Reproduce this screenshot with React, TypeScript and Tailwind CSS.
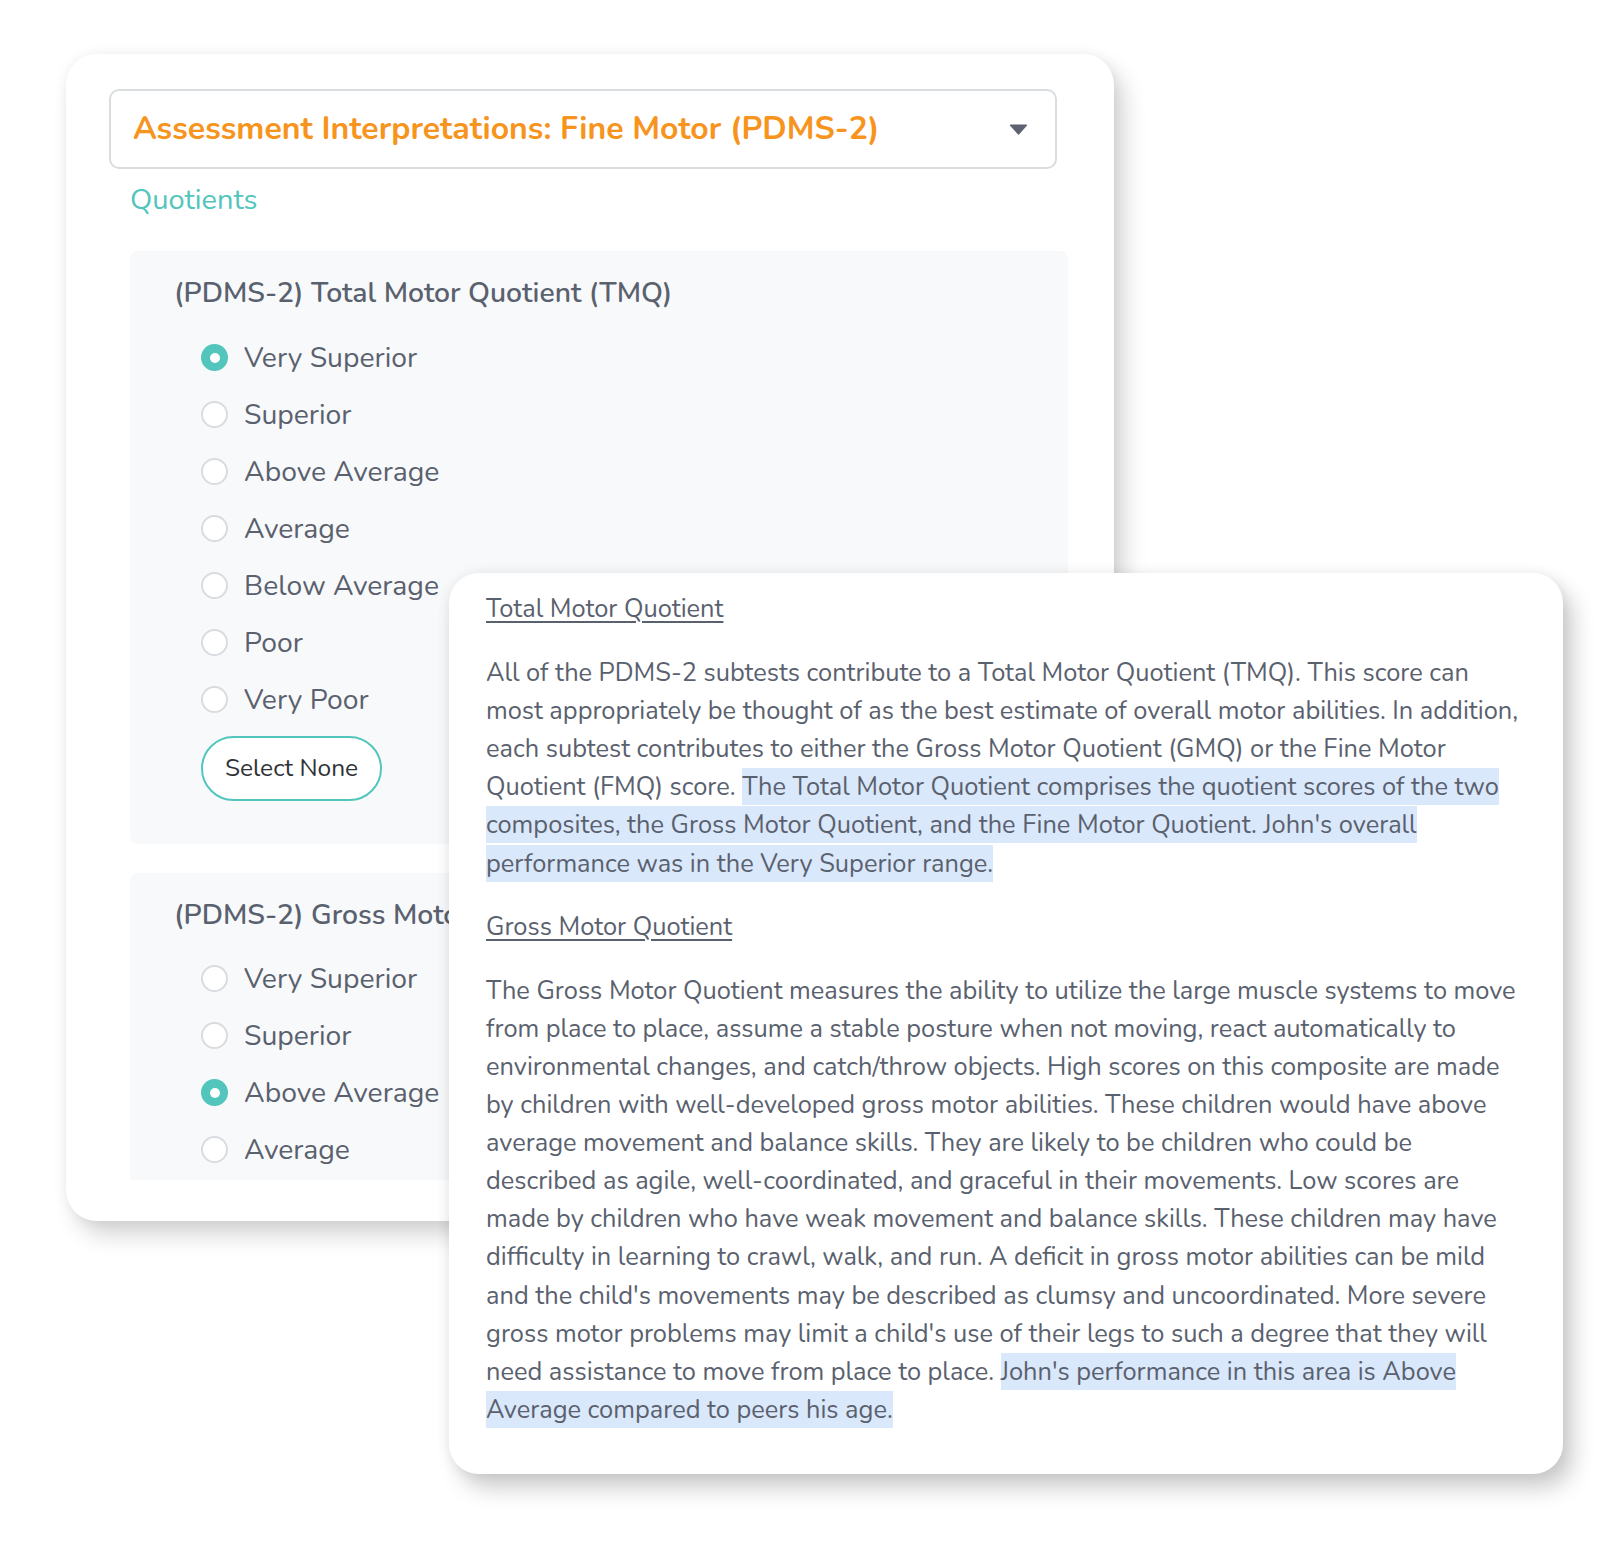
import React from "react";

const FONT = { fontFamily: "Nunito, Lato, 'Noto Sans', sans-serif" };

function Radio({ label, checked }: { label: string; checked?: boolean }) {
  return (
    <div className="flex items-center h-[57px]">
      {checked ? (
        <div className="w-[27px] h-[27px] rounded-full bg-[#52c5bd] flex items-center justify-center">
          <div className="w-[10px] h-[10px] rounded-full bg-white" />
        </div>
      ) : (
        <div className="w-[27px] h-[27px] rounded-full bg-white border-2 border-[#d9dcdf]" />
      )}
      <span className="ml-[16px] text-[28.3px] text-[#5a616e] leading-[38px]">{label}</span>
    </div>
  );
}

function HL({ children }: { children: React.ReactNode }) {
  return <span className="bg-[#dae8fb] py-[1px]">{children}</span>;
}

function Lines({ lines }: { lines: React.ReactNode[] }) {
  return (
    <div>
      {lines.map((l, i) => (
        <div key={i} className="whitespace-nowrap">
          {l}
        </div>
      ))}
    </div>
  );
}

export default function App() {
  return (
    <div className="relative w-[1600px] h-[1545px] bg-white overflow-hidden" style={FONT}>
      {/* Card 1 */}
      <div className="absolute left-[66px] top-[54px] w-[1048px] h-[1167px] bg-white rounded-[31px] shadow-[10px_14px_22px_rgba(0,0,0,0.17),0_0_14px_rgba(0,0,0,0.06)] pt-[35px] pb-[41px] flex flex-col">
        <div className="ml-[43px] w-[948px] h-[80px] shrink-0 border-2 border-[#dadddf] rounded-[10px] flex items-center justify-between pl-[22px] pr-[27px]">
          <span className="text-[32px] font-bold text-[#f7941d] leading-[42px]">
            Assessment Interpretations: Fine Motor (PDMS-2)
          </span>
          <svg width="19" height="11" viewBox="0 0 19 11">
            <path d="M1 1.5 Q0.3 0.5 1.6 0.5 H17.4 Q18.7 0.5 18 1.5 L10.5 10 Q9.5 11 8.5 10 Z" fill="#5e6371" />
          </svg>
        </div>
        <div className="flex-1 overflow-hidden pl-[64px]">
          <div className="mt-[12px] text-[29px] leading-[38px] text-[#52c5bd]">Quotients</div>
          <div className="mt-[32px] w-[938px] bg-[#f8f9fb] rounded-[8px] pt-[23px] pb-[43px]">
            <div className="pl-[44px] text-[28.3px] font-semibold leading-[38px] text-[#5a616e]">
              (PDMS-2) Total Motor Quotient (TMQ)
            </div>
            <div className="pl-[71px] mt-[17px]">
              <Radio label="Very Superior" checked />
              <Radio label="Superior" />
              <Radio label="Above Average" />
              <Radio label="Average" />
              <Radio label="Below Average" />
              <Radio label="Poor" />
              <Radio label="Very Poor" />
              <button className="mt-[8px] w-[181px] h-[65px] rounded-full border-2 border-[#52c5bd] bg-white text-[24.5px] text-[#2f3338]">
                Select None
              </button>
            </div>
          </div>
          <div className="mt-[29px] w-[938px] bg-[#f8f9fb] rounded-[8px] pt-[23px] pb-[42px]">
            <div className="pl-[44px] text-[28.3px] font-semibold leading-[38px] text-[#5a616e]">
              (PDMS-2) Gross Motor Quotient (GMQ)
            </div>
            <div className="pl-[71px] mt-[16px]">
              <Radio label="Very Superior" />
              <Radio label="Superior" />
              <Radio label="Above Average" checked />
              <Radio label="Average" />
            </div>
          </div>
        </div>
      </div>

      {/* Card 2 */}
      <div className="absolute left-[449px] top-[573px] w-[1114px] h-[901px] bg-white rounded-[30px] shadow-[10px_14px_22px_rgba(0,0,0,0.2),0_0_14px_rgba(0,0,0,0.07)] pl-[37px] pt-[17px] text-[25.4px] leading-[38.1px] text-[#5a616e]">
        <div className="underline underline-offset-[4px] decoration-[1.5px]">Total Motor Quotient</div>
        <div className="mt-[26px]">
          <Lines
            lines={[
              "All of the PDMS-2 subtests contribute to a Total Motor Quotient (TMQ). This score can",
              "most appropriately be thought of as the best estimate of overall motor abilities. In addition,",
              "each subtest contributes to either the Gross Motor Quotient (GMQ) or the Fine Motor",
              <>
                Quotient (FMQ) score. <HL>The Total Motor Quotient comprises the quotient scores of the two</HL>
              </>,
              <HL>composites, the Gross Motor Quotient, and the Fine Motor Quotient. John's overall</HL>,
              <HL>performance was in the Very Superior range.</HL>,
            ]}
          />
        </div>
        <div className="mt-[25px] underline underline-offset-[4px] decoration-[1.5px]">Gross Motor Quotient</div>
        <div className="mt-[26px]">
          <Lines
            lines={[
              "The Gross Motor Quotient measures the ability to utilize the large muscle systems to move",
              "from place to place, assume a stable posture when not moving, react automatically to",
              "environmental changes, and catch/throw objects. High scores on this composite are made",
              "by children with well-developed gross motor abilities. These children would have above",
              "average movement and balance skills. They are likely to be children who could be",
              "described as agile, well-coordinated, and graceful in their movements. Low scores are",
              "made by children who have weak movement and balance skills. These children may have",
              "difficulty in learning to crawl, walk, and run. A deficit in gross motor abilities can be mild",
              "and the child's movements may be described as clumsy and uncoordinated. More severe",
              "gross motor problems may limit a child's use of their legs to such a degree that they will",
              <>
                need assistance to move from place to place. <HL>John's performance in this area is Above</HL>
              </>,
              <HL>Average compared to peers his age.</HL>,
            ]}
          />
        </div>
      </div>
    </div>
  );
}
